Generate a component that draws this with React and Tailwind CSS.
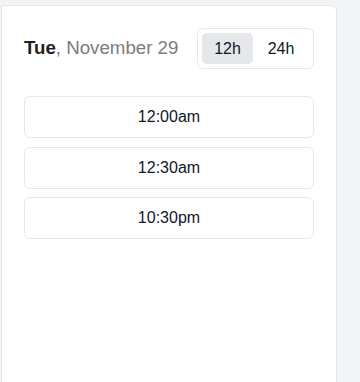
export default function App() {
  const slots = ["12:00am", "12:30am", "10:30pm"];
  return (
    <div className="h-[382px] w-[360px] overflow-hidden bg-[#f3f4f6] pl-[1px] pt-[5px]" style={{ fontFamily: "'Liberation Sans', Arial, sans-serif" }}>
      <div className="h-[400px] w-[336px] rounded-tr-md border border-[#e5e7eb] bg-white px-[22px] pt-[22px]">
        <div className="flex items-center justify-between">
          <div className="text-[18.7px] text-[#7c7c7c]">
            <span className="font-bold text-[#1f1f1f]">Tue</span>, November 29
          </div>
          <div className="flex h-[41px] items-center rounded-md border border-[#e5e7eb] p-[4px]">
            <button className="h-[31px] w-[51px] rounded-[5px] bg-[#e5e7eb] text-base text-[#111827]">12h</button>
            <button className="h-[31px] w-[56px] rounded-[5px] text-base text-[#111827]">24h</button>
          </div>
        </div>
        <div className="mt-[27px] flex flex-col gap-[8.5px]">
          {slots.map((s) => (
            <button key={s} className="h-[42px] w-full rounded-md border border-[#e5e7eb] bg-white text-base text-[#111827]">
              {s}
            </button>
          ))}
        </div>
      </div>
    </div>
  );
}
